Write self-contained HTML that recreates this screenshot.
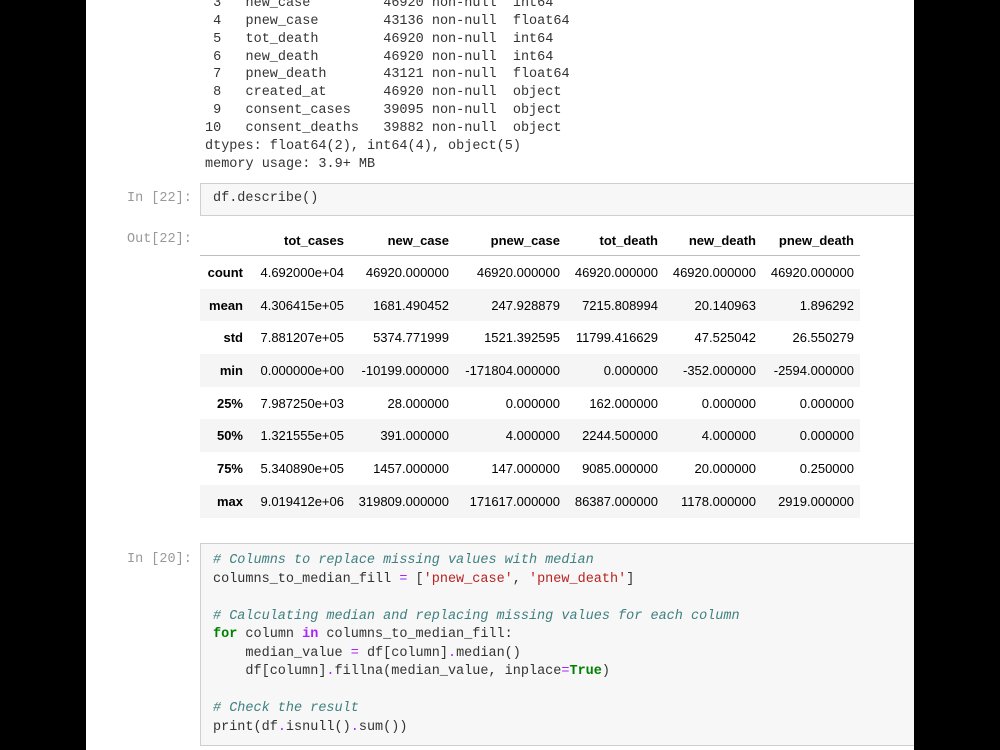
<!DOCTYPE html>
<html><head><style>
body{margin:0;width:1000px;height:750px;background:#000;position:relative;overflow:hidden;font-family:"Liberation Sans",sans-serif}
#page{position:absolute;left:86px;top:0;width:828px;height:750px;background:#fff}
.mono{font-family:"Liberation Mono",monospace;font-size:13.5px;color:#333;white-space:pre;position:absolute}
.prompt{position:absolute;font-family:"Liberation Mono",monospace;font-size:13.5px;color:#999;white-space:pre}
.box{position:absolute;left:200px;width:714px;background:#f7f7f7;border:1px solid #cfcfcf;border-right:none;box-sizing:border-box}
table{position:absolute;left:200px;top:225px;border-collapse:collapse;font-size:13px;color:#000}
td,th{text-align:right;padding:0 6px 0 0;height:32.7px;white-space:nowrap}
th{font-weight:bold}
thead th{border-bottom:1px solid #bdbdbd;height:30px}
tbody tr:nth-child(even){background:#f5f5f5}
.c{color:#408080;font-style:italic}.k{color:#008000;font-weight:bold}.s{color:#ba2121}.o{color:#aa22ff;font-weight:bold}.p{color:#aa22ff}
</style></head><body>
<div id="page"></div>
<div class="mono" style="left:205px;top:-5px;line-height:17.85px"> 3   new_case         46920 non-null  int64  
 4   pnew_case        43136 non-null  float64
 5   tot_death        46920 non-null  int64  
 6   new_death        46920 non-null  int64  
 7   pnew_death       43121 non-null  float64
 8   created_at       46920 non-null  object 
 9   consent_cases    39095 non-null  object 
10   consent_deaths   39882 non-null  object 
dtypes: float64(2), int64(4), object(5)
memory usage: 3.9+ MB</div>
<div class="prompt" style="left:127px;top:191px">In [22]:</div>
<div class="box" style="top:183px;height:33px"></div>
<div class="mono" style="left:213px;top:191px">df.describe()</div>
<div class="prompt" style="left:127px;top:232px">Out[22]:</div>
<table>
<colgroup><col style="width:49px"><col style="width:101px"><col style="width:105px"><col style="width:111px"><col style="width:98px"><col style="width:98px"><col style="width:98px"></colgroup>
<thead><tr><th></th><th>tot_cases</th><th>new_case</th><th>pnew_case</th><th>tot_death</th><th>new_death</th><th>pnew_death</th></tr></thead>
<tbody>
<tr><th>count</th><td>4.692000e+04</td><td>46920.000000</td><td>46920.000000</td><td>46920.000000</td><td>46920.000000</td><td>46920.000000</td></tr>
<tr><th>mean</th><td>4.306415e+05</td><td>1681.490452</td><td>247.928879</td><td>7215.808994</td><td>20.140963</td><td>1.896292</td></tr>
<tr><th>std</th><td>7.881207e+05</td><td>5374.771999</td><td>1521.392595</td><td>11799.416629</td><td>47.525042</td><td>26.550279</td></tr>
<tr><th>min</th><td>0.000000e+00</td><td>-10199.000000</td><td>-171804.000000</td><td>0.000000</td><td>-352.000000</td><td>-2594.000000</td></tr>
<tr><th>25%</th><td>7.987250e+03</td><td>28.000000</td><td>0.000000</td><td>162.000000</td><td>0.000000</td><td>0.000000</td></tr>
<tr><th>50%</th><td>1.321555e+05</td><td>391.000000</td><td>4.000000</td><td>2244.500000</td><td>4.000000</td><td>0.000000</td></tr>
<tr><th>75%</th><td>5.340890e+05</td><td>1457.000000</td><td>147.000000</td><td>9085.000000</td><td>20.000000</td><td>0.250000</td></tr>
<tr><th>max</th><td>9.019412e+06</td><td>319809.000000</td><td>171617.000000</td><td>86387.000000</td><td>1178.000000</td><td>2919.000000</td></tr>
</tbody></table>
<div class="prompt" style="left:127px;top:552px">In [20]:</div>
<div class="box" style="top:543px;height:203px"></div>
<div class="mono" style="left:213px;top:552px;line-height:18.5px"><span class="c"># Columns to replace missing values with median</span>
columns_to_median_fill <span class="p">=</span> [<span class="s">'pnew_case'</span>, <span class="s">'pnew_death'</span>]

<span class="c"># Calculating median and replacing missing values for each column</span>
<span class="k">for</span> column <span class="o">in</span> columns_to_median_fill:
    median_value <span class="p">=</span> df[column]<span class="p">.</span>median()
    df[column]<span class="p">.</span>fillna(median_value, inplace<span class="p">=</span><span class="k">True</span>)

<span class="c"># Check the result</span>
print(df<span class="p">.</span>isnull()<span class="p">.</span>sum())</div>
<div style="position:absolute;left:914px;top:0;width:86px;height:750px;background:#000"></div>
</body></html>
